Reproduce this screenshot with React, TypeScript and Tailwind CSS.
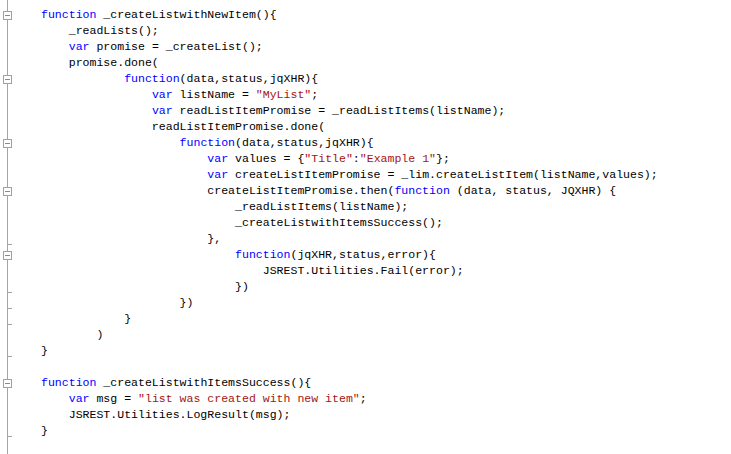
import React from 'react';

type Fold = 'open' | 'end' | null;

interface CodeLine {
  text: string;
  fold: Fold;
}

const lines: CodeLine[] = [
  { text: 'function _createListwithNewItem(){', fold: 'open' },
  { text: '    _readLists();', fold: null },
  { text: '    var promise = _createList();', fold: null },
  { text: '    promise.done(', fold: null },
  { text: '            function(data,status,jqXHR){', fold: 'open' },
  { text: '                var listName = "MyList";', fold: null },
  { text: '                var readListItemPromise = _readListItems(listName);', fold: null },
  { text: '                readListItemPromise.done(', fold: null },
  { text: '                    function(data,status,jqXHR){', fold: 'open' },
  { text: '                        var values = {"Title":"Example 1"};', fold: null },
  { text: '                        var createListItemPromise = _lim.createListItem(listName,values);', fold: null },
  { text: '                        createListItemPromise.then(function (data, status, JQXHR) {', fold: 'open' },
  { text: '                            _readListItems(listName);', fold: null },
  { text: '                            _createListwithItemsSuccess();', fold: null },
  { text: '                        },', fold: 'end' },
  { text: '                            function(jqXHR,status,error){', fold: 'open' },
  { text: '                                JSREST.Utilities.Fail(error);', fold: null },
  { text: '                            })', fold: 'end' },
  { text: '                    })', fold: 'end' },
  { text: '            }', fold: 'end' },
  { text: '        )', fold: null },
  { text: '}', fold: 'end' },
  { text: '', fold: null },
  { text: 'function _createListwithItemsSuccess(){', fold: 'open' },
  { text: '    var msg = "list was created with new item";', fold: null },
  { text: '    JSREST.Utilities.LogResult(msg);', fold: null },
  { text: '}', fold: 'end' },
  { text: '', fold: null },
];

// split a line into keyword / string / plain pieces
const tokenize = (text: string) => {
  const parts = text.split(/(\bfunction\b|\bvar\b|"[^"]*")/g);
  return parts.map((p, i) => {
    if (p === 'function' || p === 'var') return <span key={i} className="text-[#0000ff]">{p}</span>;
    if (p.startsWith('"')) return <span key={i} className="text-[#a31515]">{p}</span>;
    return <span key={i}>{p}</span>;
  });
};

const Gutter: React.FC<{ fold: Fold }> = ({ fold }) => {
  if (fold === 'open') {
    return (
      <div className="ml-[2px] flex w-[11px] shrink-0 flex-col items-center">
        <div className="h-[5px] w-px bg-[#a5a5a5]" />
        <div className="flex size-[9px] items-center justify-center border border-[#a0a0a0] bg-white">
          <div className="h-px w-[5px] bg-[#8a8a8a]" />
        </div>
        <div className="w-px flex-1 bg-[#a5a5a5]" />
      </div>
    );
  }
  if (fold === 'end') {
    return (
      <div className="ml-[2px] flex w-[11px] shrink-0 items-end pl-[5px]">
        <div className="h-full w-px bg-[#a5a5a5]" />
        <div className="mb-px h-px w-1 bg-[#a5a5a5]" />
      </div>
    );
  }
  return (
    <div className="ml-[2px] flex w-[11px] shrink-0 justify-center">
      <div className="h-full w-px bg-[#a5a5a5]" />
    </div>
  );
};

const App: React.FC = () => {
  return (
    <div className="flex h-[454px] w-[731px] flex-col overflow-hidden bg-white">
      <div className="flex h-[9px]">
        <Gutter fold={null} />
      </div>
      {lines.map((line, i) => (
        <div key={i} className="flex h-4 shrink-0">
          <Gutter fold={line.fold} />
          <pre className="pl-[28px] pt-px font-['Liberation_Mono',monospace] text-[11.55px] leading-4 text-black">
            {tokenize(line.text)}
          </pre>
        </div>
      ))}
      <div className="flex flex-1">
        <Gutter fold={null} />
      </div>
    </div>
  );
};

export default App;
